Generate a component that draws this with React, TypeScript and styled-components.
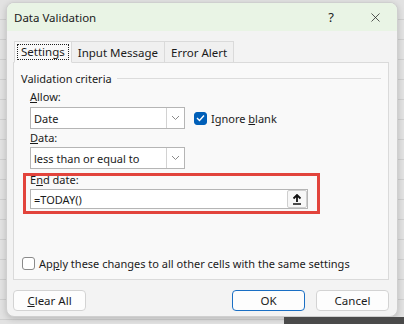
import React from "react";
import styled, { createGlobalStyle } from "styled-components";
import { X } from "lucide-react";

const Global = createGlobalStyle`
  html, body { margin: 0; padding: 0; }
  body {
    width: 404px;
    height: 324px;
    overflow: hidden;
    font-family: "Noto Sans", "Open Sans", sans-serif;
    font-size: 11px;
    color: #1b1b1b;
    background-color: #e2e2e2;
    background-image:
      repeating-linear-gradient(to bottom, transparent 0, transparent 19px, #cfcfcf 19px, #cfcfcf 20px);
  }
`;

const Page = styled.div`
  display: flex;
  flex-direction: column;
  padding: 2px 6px 0 6px;
  height: 324px;
  box-sizing: border-box;
`;

const Dialog = styled.div`
  width: 392px;
  height: 315px;
  box-sizing: border-box;
  background: #f3f3f3;
  border: 1px solid #cfcfcf;
  border-radius: 8px;
  box-shadow: 0 2px 6px rgba(0, 0, 0, 0.18);
  display: flex;
  flex-direction: column;
  overflow: hidden;
`;

const TitleBar = styled.div`
  height: 28px;
  background: #e9f4e5;
  display: flex;
  align-items: center;
  padding: 0 0 0 7px;
  flex-shrink: 0;
`;

const Title = styled.div`
  flex: 1;
  font-size: 11.5px;
  color: #1a1a1a;
`;

const TitleButton = styled.div`
  width: 44px;
  height: 28px;
  display: flex;
  align-items: center;
  justify-content: center;
  font-size: 13px;
  color: #222;
`;

const Body = styled.div`
  flex: 1;
  display: flex;
  flex-direction: column;
  padding: 9px 8px 8px 6px;
`;

const TabStrip = styled.div`
  display: flex;
  height: 22px;
  padding-left: 1px;
  align-items: flex-end;
`;

const Tab = styled.div<{ $active?: boolean }>`
  height: ${(p) => (p.$active ? 22 : 21)}px;
  box-sizing: border-box;
  padding: 0 ${(p) => (p.$active ? 2 : 6)}px;
  display: flex;
  align-items: center;
  background: ${(p) => (p.$active ? "#f9f9f9" : "#f0f0f0")};
  border: 1px solid #dadada;
  border-bottom: ${(p) => (p.$active ? "1px solid #f9f9f9" : "none")};
  margin-bottom: ${(p) => (p.$active ? -1 : 0)}px;
  margin-left: ${(p) => (p.$active ? 0 : -1)}px;
  position: relative;
  z-index: ${(p) => (p.$active ? 1 : 0)};
  font-size: 11.5px;
`;

const FocusRect = styled.span`
  border: 1px dotted #222;
  padding: 0 3px;
  line-height: 14px;
`;

const Panel = styled.div`
  height: 218px;
  box-sizing: border-box;
  background: #f9f9f9;
  border: 1px solid #dadada;
  padding: 7px 7px 7px 7px;
  display: flex;
  flex-direction: column;
`;

const Legend = styled.div`
  display: flex;
  align-items: center;
  gap: 5px;
  height: 16px;
  &::after {
    content: "";
    flex: 1;
    height: 1px;
    background: #dcdcdc;
  }
`;

const Group = styled.div`
  display: flex;
  flex-direction: column;
  padding-left: 9px;
`;

const Label = styled.div<{ $mt?: number }>`
  line-height: 14px;
  margin-top: ${(p) => p.$mt ?? 0}px;
`;

const Row = styled.div<{ $mt?: number }>`
  display: flex;
  align-items: center;
  gap: 9px;
  margin-top: ${(p) => p.$mt ?? 0}px;
`;

const Select = styled.div`
  width: 155px;
  height: 22px;
  box-sizing: border-box;
  background: #fff;
  border: 1px solid #b5b5b5;
  display: flex;
  align-items: stretch;
`;

const SelectValue = styled.div`
  flex: 1;
  display: flex;
  align-items: center;
  padding-left: 3px;
`;

const SelectArrow = styled.div`
  width: 17px;
  border-left: 1px solid #d2d2d2;
  display: flex;
  align-items: center;
  justify-content: center;
`;

const CheckLabel = styled.div`
  display: flex;
  align-items: center;
  gap: 4px;
`;

const Box = styled.div<{ $checked?: boolean }>`
  width: 13px;
  height: 13px;
  box-sizing: border-box;
  border-radius: 3px;
  background: ${(p) => (p.$checked ? "#005fb8" : "#fff")};
  border: 1px solid ${(p) => (p.$checked ? "#005fb8" : "#8a8a8a")};
  display: flex;
  align-items: center;
  justify-content: center;
`;

const Field = styled.div`
  position: relative;
  display: flex;
  flex-direction: column;
  margin-top: 4px;
`;

const Highlight = styled.div`
  position: absolute;
  left: -7px;
  top: 0;
  width: 297px;
  height: 41px;
  box-sizing: border-box;
  border: 3px solid #e2443c;
  pointer-events: none;
`;

const Input = styled.div`
  width: 278px;
  height: 20px;
  box-sizing: border-box;
  margin-top: 2px;
  background: #fff;
  border: 1px solid #b5b5b5;
  display: flex;
  align-items: center;
  justify-content: space-between;
  padding-left: 3px;
`;

const RefButton = styled.div`
  width: 20px;
  height: 18px;
  box-sizing: border-box;
  border: 1px solid #cfcfcf;
  border-radius: 2px;
  background: #f7f7f7;
  display: flex;
  align-items: center;
  justify-content: center;
`;

const ApplyRow = styled.div`
  margin-top: auto;
  display: flex;
  align-items: center;
  gap: 4px;
  padding-left: 1px;
  padding-bottom: 1px;
`;

const Buttons = styled.div`
  display: flex;
  align-items: center;
  margin-top: 10px;
  gap: 11px;
`;

const Button = styled.div<{ $primary?: boolean }>`
  width: 73px;
  height: 21px;
  box-sizing: border-box;
  border-radius: 4px;
  background: #fdfdfd;
  border: 1px solid ${(p) => (p.$primary ? "#1a6fc4" : "#d3d3d3")};
  display: flex;
  align-items: center;
  justify-content: center;
  font-size: 11.5px;
`;

const Spacer = styled.div`
  flex: 1;
`;

const BottomStrip = styled.div`
  display: flex;
  align-items: stretch;
  height: 7px;
  margin: 0 -6px;
`;

const DarkBar = styled.div`
  margin-left: auto;
  width: 120px;
  background: #4a4a4a;
`;

const Chevron = () => (
  <svg width="9" height="6" viewBox="0 0 9 6">
    <path d="M1 1 L4.5 4.5 L8 1" fill="none" stroke="#8a8a8a" strokeWidth="1" />
  </svg>
);

const Tick = () => (
  <svg width="9" height="8" viewBox="0 0 9 8">
    <path d="M1 4 L3.5 6.5 L8 1.5" fill="none" stroke="#fff" strokeWidth="1.4" />
  </svg>
);

const UpArrow = () => (
  <svg width="10" height="11" viewBox="0 0 10 11">
    <path d="M5 1 L5 8 M1.5 4.5 L5 1 L8.5 4.5" fill="none" stroke="#111" strokeWidth="1.8" />
    <path d="M1 10 L9 10" stroke="#111" strokeWidth="1.5" />
  </svg>
);

export default function App() {
  return (
    <>
      <Global />
      <Page>
        <Dialog>
          <TitleBar>
            <Title>Data Validation</Title>
            <TitleButton>?</TitleButton>
            <TitleButton>
              <X size={15} strokeWidth={1.2} />
            </TitleButton>
          </TitleBar>
          <Body>
            <TabStrip>
              <Tab $active>
                <FocusRect>Settings</FocusRect>
              </Tab>
              <Tab>Input Message</Tab>
              <Tab>Error Alert</Tab>
            </TabStrip>
            <Panel>
              <Legend>Validation criteria</Legend>
              <Group>
                <Label $mt={4}>
                  <u>A</u>llow:
                </Label>
                <Row $mt={3}>
                  <Select>
                    <SelectValue>Date</SelectValue>
                    <SelectArrow>
                      <Chevron />
                    </SelectArrow>
                  </Select>
                  <CheckLabel>
                    <Box $checked>
                      <Tick />
                    </Box>
                    <span>
                      Ignore <u>b</u>lank
                    </span>
                  </CheckLabel>
                </Row>
                <Label $mt={2}>
                  <u>D</u>ata:
                </Label>
                <Row $mt={2}>
                  <Select>
                    <SelectValue>less than or equal to</SelectValue>
                    <SelectArrow>
                      <Chevron />
                    </SelectArrow>
                  </Select>
                </Row>
                <Field>
                  <Label>
                    E<u>n</u>d date:
                  </Label>
                  <Input>
                    <span>=TODAY()</span>
                    <RefButton>
                      <UpArrow />
                    </RefButton>
                  </Input>
                  <Highlight />
                </Field>
              </Group>
              <ApplyRow>
                <Box />
                <span>
                  Ap<u>p</u>ly these changes to all other cells with the same settings
                </span>
              </ApplyRow>
            </Panel>
            <Buttons>
              <Button>
                <span>
                  <u>C</u>lear All
                </span>
              </Button>
              <Spacer />
              <Button $primary>OK</Button>
              <Button>Cancel</Button>
            </Buttons>
          </Body>
        </Dialog>
        <BottomStrip>
          <DarkBar />
        </BottomStrip>
      </Page>
    </>
  );
}
